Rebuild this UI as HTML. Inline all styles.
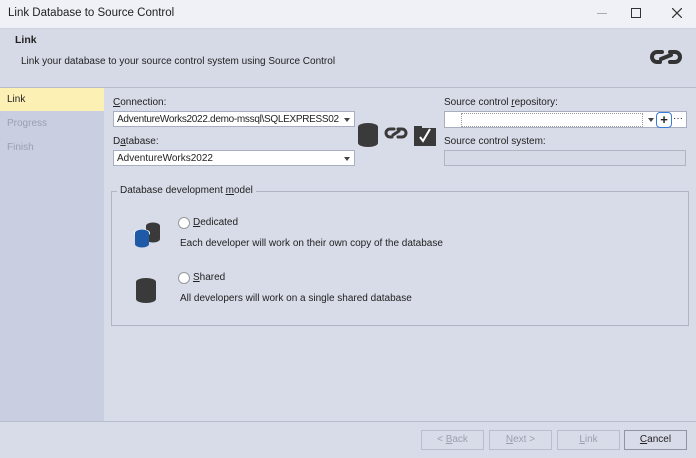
<!DOCTYPE html>
<html><head><style>
body{margin:0;width:696px;height:458px;overflow:hidden;font-family:"Liberation Sans",sans-serif;font-size:10px;color:#222;background:#d8dce8;position:relative}
.a{position:absolute;white-space:nowrap}
.combo{position:absolute;background:#fff;border:1px solid #a9afc0;height:16px;box-sizing:border-box;padding:2px 14px 2px 3px;font-size:10px;line-height:11px;white-space:nowrap;overflow:hidden}
.arr{position:absolute;right:4px;top:6px;border-left:3px solid transparent;border-right:3px solid transparent;border-top:4px solid #444}
.btn{position:absolute;top:430px;height:20px;width:63px;box-sizing:border-box;border:1px solid #b9bfcf;background:#d8dce8;color:#9aa0b0;text-align:center;line-height:18px;font-size:10px}
</style></head><body>
<div class="a" style="left:0;top:0;width:696px;height:28px;background:#eff1f7;border-bottom:1px solid #d0d4de"></div>
<div class="a" style="left:8px;top:7px;font-size:11.5px;color:#222">Link Database to Source Control</div>
<div class="a" style="left:597px;top:13px;width:10px;height:1px;background:#aaa"></div>
<div class="a" style="left:631px;top:8px;width:8px;height:8px;border:1.3px solid #333"></div>
<svg class="a" style="left:672px;top:8px" width="10" height="10"><path d="M0 0L10 10M10 0L0 10" stroke="#333" stroke-width="1.2"/></svg>
<div class="a" style="left:0;top:29px;width:696px;height:58px;background:#d6dae7;border-bottom:1px solid #b8bdcc"></div>
<div class="a" style="left:15px;top:34px;font-weight:bold;font-size:10.5px">Link</div>
<div class="a" style="left:21px;top:56px;font-size:10px">Link your database to your source control system using Source Control</div>
<svg class="a" style="left:650px;top:48px" width="32" height="18"><path d="M12 4H7a5 5 0 0 0 0 10h3M20 4h5a5 5 0 0 1 0 10h-5M11 11l10-4" stroke="#333" stroke-width="4" fill="none" stroke-linecap="round"/></svg>
<div class="a" style="left:0;top:88px;width:104px;height:333px;background:#c9cee0"></div>
<div class="a" style="left:0;top:88px;width:104px;height:23px;background:#fdf0b4"></div>
<div class="a" style="left:7px;top:94px">Link</div>
<div class="a" style="left:7px;top:118px;color:#9aa0b2">Progress</div>
<div class="a" style="left:7px;top:142px;color:#9aa0b2">Finish</div>
<div class="a" style="left:113px;top:97px"><u>C</u>onnection:</div>
<div class="combo" style="left:113px;top:111px;width:242px;letter-spacing:-0.3px">AdventureWorks2022.demo-mssql\SQLEXPRESS02<div class="arr"></div></div>
<div class="a" style="left:113px;top:136px">D<u>a</u>tabase:</div>
<div class="combo" style="left:113px;top:150px;width:242px">AdventureWorks2022<div class="arr"></div></div>
<svg class="a" style="left:357px;top:120px" width="82" height="28"><ellipse cx="11" cy="7" rx="10" ry="4" fill="#3a3a3a"/><rect x="1" y="7" width="20" height="16" fill="#3a3a3a"/><ellipse cx="11" cy="23" rx="10" ry="4" fill="#3a3a3a"/>
<path d="M37 9h-4a4 4 0 0 0 0 8h2M41 9h4a4 4 0 0 1 0 8h-4M36 15l6-4" stroke="#3a3a3a" stroke-width="3" fill="none" stroke-linecap="round"/>
<path d="M57 6h8v2h14v18H57z" fill="#3a3a3a"/><path d="M63 17l3 4 7-12" stroke="#fff" stroke-width="2" fill="none"/></svg>
<div class="a" style="left:444px;top:97px">Source control <u>r</u>epository:</div>
<div class="combo" style="left:444px;top:111px;width:243px;height:17px"></div>
<div class="a" style="left:461px;top:113px;width:180px;height:12px;border:1px dotted #999"></div>
<div class="arr a" style="left:648px;top:118px;right:auto"></div>
<div class="a" style="left:656px;top:112px;width:14px;height:14px;border:1px solid #3a7bd5;border-radius:4px;text-align:center;line-height:13px;font-weight:bold;font-size:13px">+</div>
<div class="a" style="left:673px;top:113px;font-size:10px">···</div>
<div class="a" style="left:444px;top:136px">Source control system:</div>
<div class="a" style="left:444px;top:150px;width:242px;height:16px;box-sizing:border-box;border:1px solid #b0b5c4;background:#d6dae6"></div>
<div class="a" style="left:111px;top:191px;width:576px;height:133px;border:1px solid #b0b5c4"></div>
<div class="a" style="left:117px;top:185px;padding:0 3px;background:#d8dce8">Database development <u>m</u>odel</div>
<svg class="a" style="left:133px;top:221px" width="30" height="28"><ellipse cx="20" cy="5" rx="7" ry="3.5" fill="#3a3a3a"/><rect x="13" y="5" width="14" height="13" fill="#3a3a3a"/><ellipse cx="20" cy="18" rx="7" ry="3.5" fill="#3a3a3a"/>
<ellipse cx="9" cy="12" rx="8" ry="4" fill="#fff"/><ellipse cx="9" cy="12" rx="7" ry="3.5" fill="#1e5aa8"/><rect x="2" y="12" width="14" height="11" fill="#1e5aa8"/><ellipse cx="9" cy="23" rx="7" ry="3.5" fill="#1e5aa8"/></svg>
<svg class="a" style="left:135px;top:276px" width="24" height="28"><ellipse cx="11" cy="6" rx="10" ry="4" fill="#3a3a3a"/><rect x="1" y="6" width="20" height="17" fill="#3a3a3a"/><ellipse cx="11" cy="23" rx="10" ry="4" fill="#3a3a3a"/></svg>
<div class="a" style="left:178px;top:217px;width:10px;height:10px;border-radius:50%;background:#fff;border:1px solid #999"></div>
<div class="a" style="left:193px;top:217px"><u>D</u>edicated</div>
<div class="a" style="left:180px;top:238px">Each developer will work on their own copy of the database</div>
<div class="a" style="left:178px;top:272px;width:10px;height:10px;border-radius:50%;background:#fff;border:1px solid #999"></div>
<div class="a" style="left:193px;top:272px"><u>S</u>hared</div>
<div class="a" style="left:180px;top:293px">All developers will work on a single shared database</div>
<div class="a" style="left:0;top:421px;width:696px;height:1px;background:#b8bdcc"></div>
<div class="btn" style="left:421px">&lt; <u>B</u>ack</div>
<div class="btn" style="left:489px"><u>N</u>ext &gt;</div>
<div class="btn" style="left:557px"><u>L</u>ink</div>
<div class="btn" style="left:624px;color:#222;border-color:#8f95a5"><u>C</u>ancel</div>
</body></html>
